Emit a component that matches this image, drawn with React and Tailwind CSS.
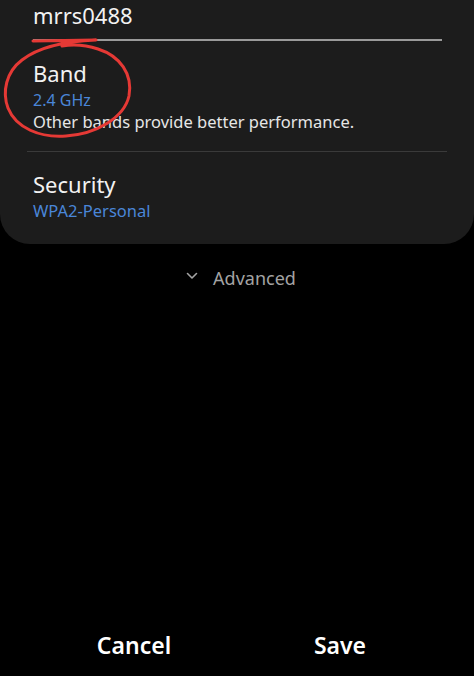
import React from "react";

const font = { fontFamily: '"Noto Sans", "Open Sans", sans-serif' };

function Scribble() {
  return (
    <svg
      className="absolute left-0 top-0 pointer-events-none"
      width="160"
      height="150"
      viewBox="0 0 160 150"
      fill="none"
    >
      <path
        d="M33 41 L96 40 C70 41 40 46 22 60 C6 72 2 92 8 108 C16 128 40 138 66 136 C96 134 124 118 129 96 C133 74 120 56 98 49 C86 45 74 44 62 46"
        stroke="#e53935"
        strokeWidth="3"
        strokeLinecap="round"
        strokeLinejoin="round"
      />
    </svg>
  );
}

export default function App() {
  return (
    <div className="min-h-[676px] h-[676px] bg-black flex flex-col text-white" style={font}>
      <div className="relative bg-[#1c1c1c] rounded-b-[30px] pb-[21px]">
        <div className="px-[33px]">
          <div className="pt-[2px] pb-[11px] border-b-2 border-[#9a9a9a] mr-[-1px]">
            <div className="text-[22px] leading-[26px] text-[#f2f2f2]">mrrs0488</div>
          </div>
          <div className="mt-[19px]">
            <div className="text-[22px] leading-[26px] text-[#f2f2f2]">Band</div>
            <div className="mt-[3px] text-[16px] leading-[22px] text-[#4a86d8]">2.4 GHz</div>
            <div className="text-[16.5px] leading-[22px] text-[#e6e6e6]">
              Other bands provide better performance.
            </div>
          </div>
        </div>
        <div className="mx-[27px] mt-[18px] h-px bg-[#3a3a3a]" />
        <div className="px-[33px] mt-[19px]">
          <div className="text-[22px] leading-[26px] text-[#f2f2f2]">Security</div>
          <div className="mt-[2px] text-[16.5px] leading-[24px] text-[#4a86d8]">WPA2-Personal</div>
        </div>
        <Scribble />
      </div>

      <div className="flex items-center justify-center gap-[15px] ml-[8px] mt-[21px] text-[#a3a3a3]">
        <svg width="12" height="8" viewBox="0 0 12 8" fill="none" className="mb-[4px]">
          <path d="M1.5 1.5 L6 6 L10.5 1.5" stroke="#a3a3a3" strokeWidth="1.6" strokeLinecap="round" strokeLinejoin="round" />
        </svg>
        <span className="text-[18px] leading-[26px]">Advanced</span>
      </div>

      <div className="mt-auto grid grid-cols-2 px-[31px] pb-[16px]">
        <button className="text-[23px] leading-[30px] font-semibold text-white text-center">Cancel</button>
        <button className="text-[23px] leading-[30px] font-semibold text-white text-center">Save</button>
      </div>
    </div>
  );
}
